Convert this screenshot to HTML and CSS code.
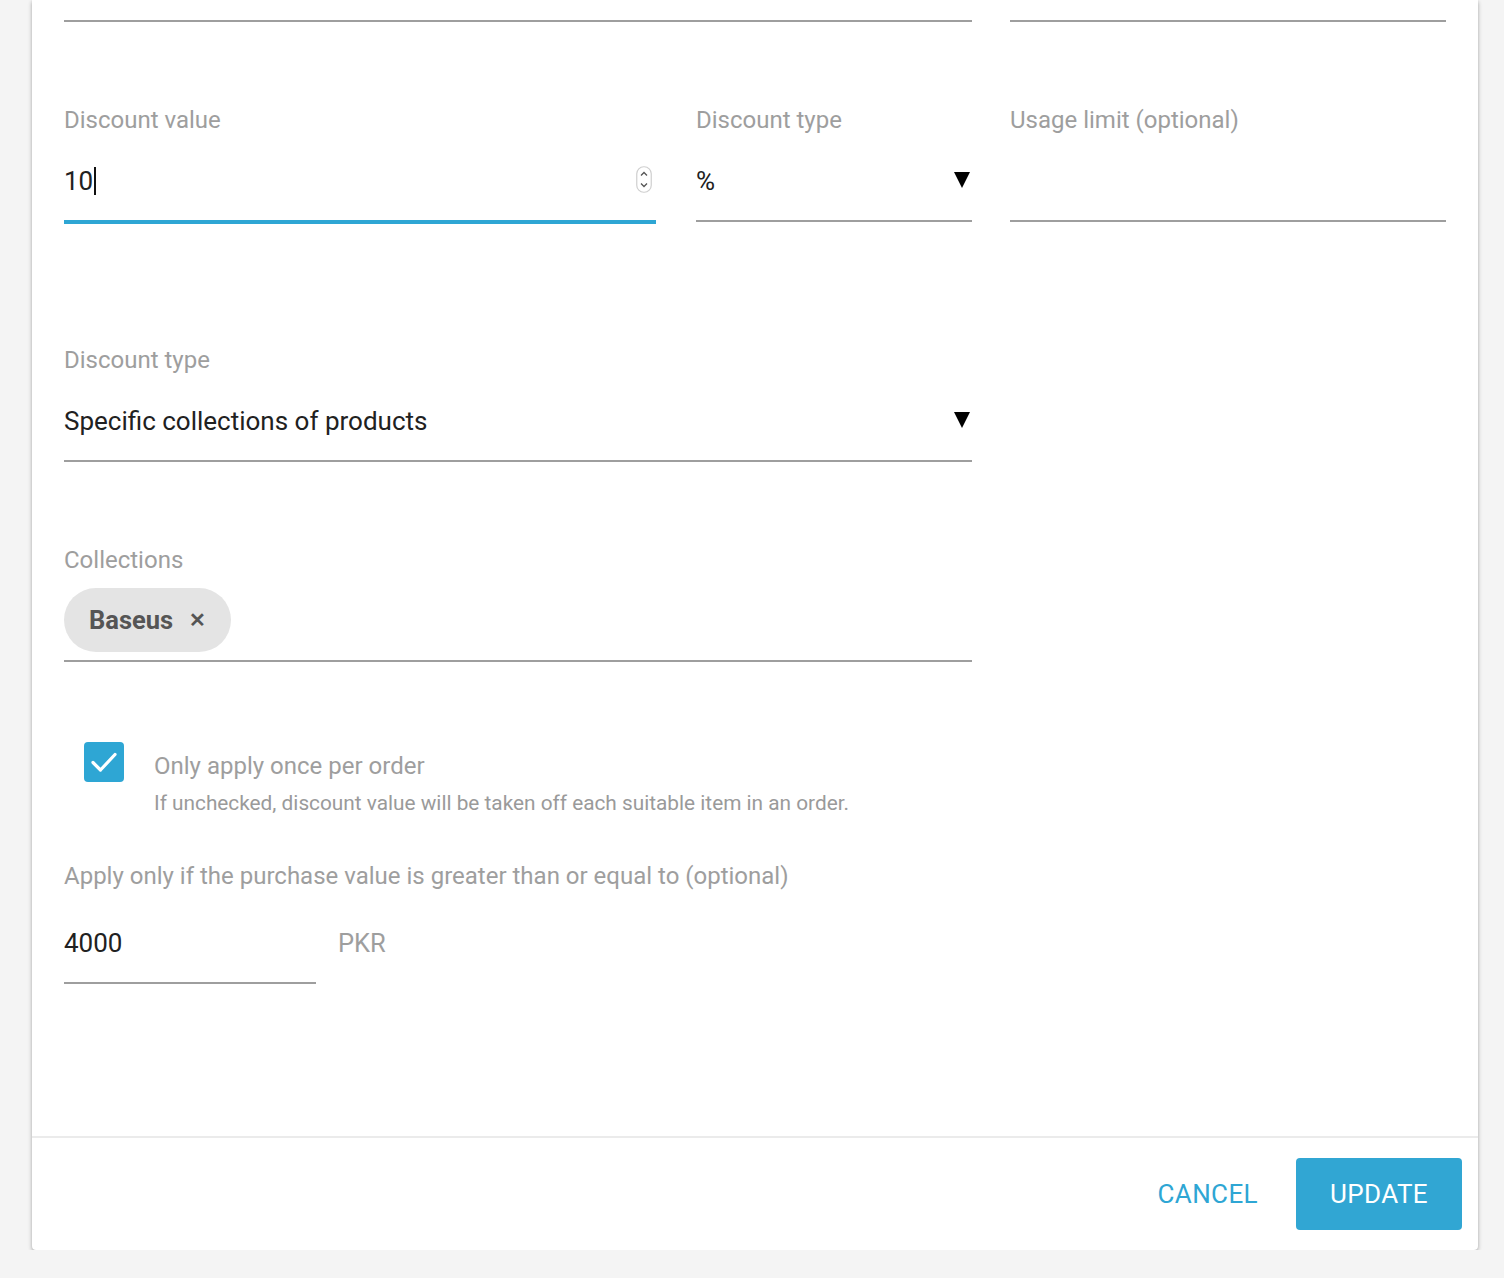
FILE: index.html
```html
<!DOCTYPE html>
<html lang="en">
<head>
<meta charset="utf-8">
<title>Edit discount</title>
<link rel="stylesheet" href="styles.css">
</head>
<body>
<div class="card">
  <div class="content">
    <div class="row prev-row">
      <div class="prev-line wide"></div>
      <div class="prev-line side"></div>
    </div>

    <div class="row row-first">
      <div class="field w-value">
        <div class="label">Discount value</div>
        <div class="input focused">
          <span class="value">10</span><span class="caret"></span>
          <span class="spinner">
            <svg width="16" height="27" viewBox="0 0 16 27">
              <rect x="0.75" y="0.75" width="14.5" height="25.5" rx="7" ry="7" fill="#fff" stroke="#cfcfcf" stroke-width="1.2"/>
              <path d="M5 9.5 L8 6.5 L11 9.5" fill="none" stroke="#555" stroke-width="1.3"/>
              <path d="M5 17.5 L8 20.5 L11 17.5" fill="none" stroke="#555" stroke-width="1.3"/>
            </svg>
          </span>
        </div>
      </div>
      <div class="field w-type">
        <div class="label">Discount type</div>
        <div class="input select">
          <span class="value">%</span>
          <svg class="arrow" width="18" height="16" viewBox="0 0 18 16"><polygon points="1,0 17,0 9,16" fill="#000"/></svg>
        </div>
      </div>
      <div class="field w-side">
        <div class="label">Usage limit (optional)</div>
        <div class="input"><span class="value"></span></div>
      </div>
    </div>

    <div class="row row-second">
      <div class="field w-wide">
        <div class="label">Discount type</div>
        <div class="input select">
          <span class="value">Specific collections of products</span>
          <svg class="arrow" width="18" height="16" viewBox="0 0 18 16"><polygon points="1,0 17,0 9,16" fill="#000"/></svg>
        </div>
      </div>
    </div>

    <div class="row row-collections">
      <div class="field w-wide">
        <div class="label">Collections</div>
        <div class="chips">
          <span class="chip">Baseus <span class="chip-x">✕</span></span>
        </div>
      </div>
    </div>

    <div class="check-row">
      <span class="checkbox">
        <svg width="40" height="40" viewBox="0 0 40 40">
          <path d="M9 20.5 L16.5 28 L31 12.5" fill="none" stroke="#fff" stroke-width="3.2" stroke-linecap="round" stroke-linejoin="round"/>
        </svg>
      </span>
      <div class="check-text">
        <div class="check-label">Only apply once per order</div>
        <div class="check-help">If unchecked, discount value will be taken off each suitable item in an order.</div>
      </div>
    </div>

    <div class="purchase">
      <div class="label">Apply only if the purchase value is greater than or equal to (optional)</div>
      <div class="purchase-row">
        <div class="input w-amount"><span class="value">4000</span></div>
        <span class="currency">PKR</span>
      </div>
    </div>
  </div>

  <div class="footer">
    <button class="btn btn-text">CANCEL</button>
    <button class="btn btn-primary">UPDATE</button>
  </div>
</div>
</body>
</html>
```
FILE: styles.css
```css
html, body {
  margin: 0;
  padding: 0;
  background: #f4f4f4;
  font-family: Roboto, "Liberation Sans", Arial, sans-serif;
}

.card {
  width: 1446px;
  margin-left: 32px;
  background: #fff;
  border-radius: 0 0 4px 4px;
  box-shadow: 0 2px 4px rgba(0, 0, 0, 0.3), 0 0 2px rgba(0, 0, 0, 0.08);
}

.content {
  padding: 0 32px 0 32px;
}

.row {
  display: flex;
}

.prev-row {
  gap: 38px;
  padding-top: 20px;
}

.prev-line {
  height: 2px;
  background: #9e9e9e;
}

.prev-line.wide { width: 908px; }
.prev-line.side { width: 436px; }

.row-first {
  margin-top: 82px;
}

.row-first .w-value { width: 592px; margin-right: 40px; }
.row-first .w-type { width: 276px; margin-right: 38px; }
.row-first .w-side { width: 436px; }

.w-wide { width: 908px; }

.row-second {
  margin-top: 122px;
}

.row-collections {
  margin-top: 82px;
}

.field {
  display: flex;
  flex-direction: column;
}

.label {
  font-size: 24px;
  line-height: 32px;
  height: 32px;
  color: #9e9e9e;
  white-space: nowrap;
}

.input {
  position: relative;
  display: flex;
  align-items: center;
  margin-top: 25px;
  height: 40px;
  padding-bottom: 19px;
  border-bottom: 2px solid #9e9e9e;
}

.input.focused {
  border-bottom: 4px solid #2ea6d4;
  margin-bottom: -2px;
}

.value {
  font-size: 26px;
  line-height: 40px;
  color: #212121;
}

.caret {
  display: inline-block;
  width: 2px;
  height: 28px;
  background: #111;
  margin-left: 1px;
}

.spinner {
  position: absolute;
  right: 4px;
  top: 5px;
  display: flex;
}

.select {
  justify-content: space-between;
}

.arrow {
  margin-right: 1px;
  margin-top: -2px;
}

.chips {
  display: flex;
  margin-top: 12px;
  padding-bottom: 8px;
  border-bottom: 2px solid #9e9e9e;
}

.chip {
  display: inline-flex;
  align-items: center;
  height: 64px;
  padding: 0 25px 0 25px;
  border-radius: 32px;
  background: #e4e4e4;
  color: #555;
  font-size: 25.5px;
  font-weight: 700;
}

.chip-x {
  margin-left: 16px;
  font-size: 20px;
  font-weight: 700;
  color: #555;
}

.check-row {
  display: flex;
  margin-top: 80px;
  padding-left: 20px;
}

.checkbox {
  width: 40px;
  height: 40px;
  border-radius: 4px;
  background: #2ea6d4;
  flex: none;
  display: flex;
}

.check-text {
  margin-left: 30px;
  padding-top: 8px;
}

.check-label {
  font-size: 24px;
  line-height: 32px;
  color: #9e9e9e;
}

.check-help {
  margin-top: 8px;
  font-size: 20.8px;
  line-height: 26px;
  color: #9a9a9a;
}

.purchase {
  margin-top: 44px;
}

.purchase-row {
  display: flex;
  align-items: flex-start;
}

.purchase .input {
  margin-top: 31px;
}

.w-amount {
  width: 252px;
}

.currency {
  margin-top: 31px;
  margin-left: 22px;
  font-size: 25.5px;
  line-height: 40px;
  color: #9e9e9e;
}

.footer {
  margin-top: 152px;
  border-top: 2px solid #ebebeb;
  display: flex;
  justify-content: flex-end;
  align-items: center;
  gap: 38px;
  padding: 20px 16px 20px 0;
}

.btn {
  font-family: Roboto, "Liberation Sans", Arial, sans-serif;
  font-size: 26px;
  letter-spacing: 0.4px;
  border: none;
  background: none;
  cursor: pointer;
  height: 72px;
  padding: 0;
}

.btn-text {
  color: #2ea6d4;
}

.btn-primary {
  width: 166px;
  background: #31a6d3;
  color: #fff;
  border-radius: 4px;
}
```
